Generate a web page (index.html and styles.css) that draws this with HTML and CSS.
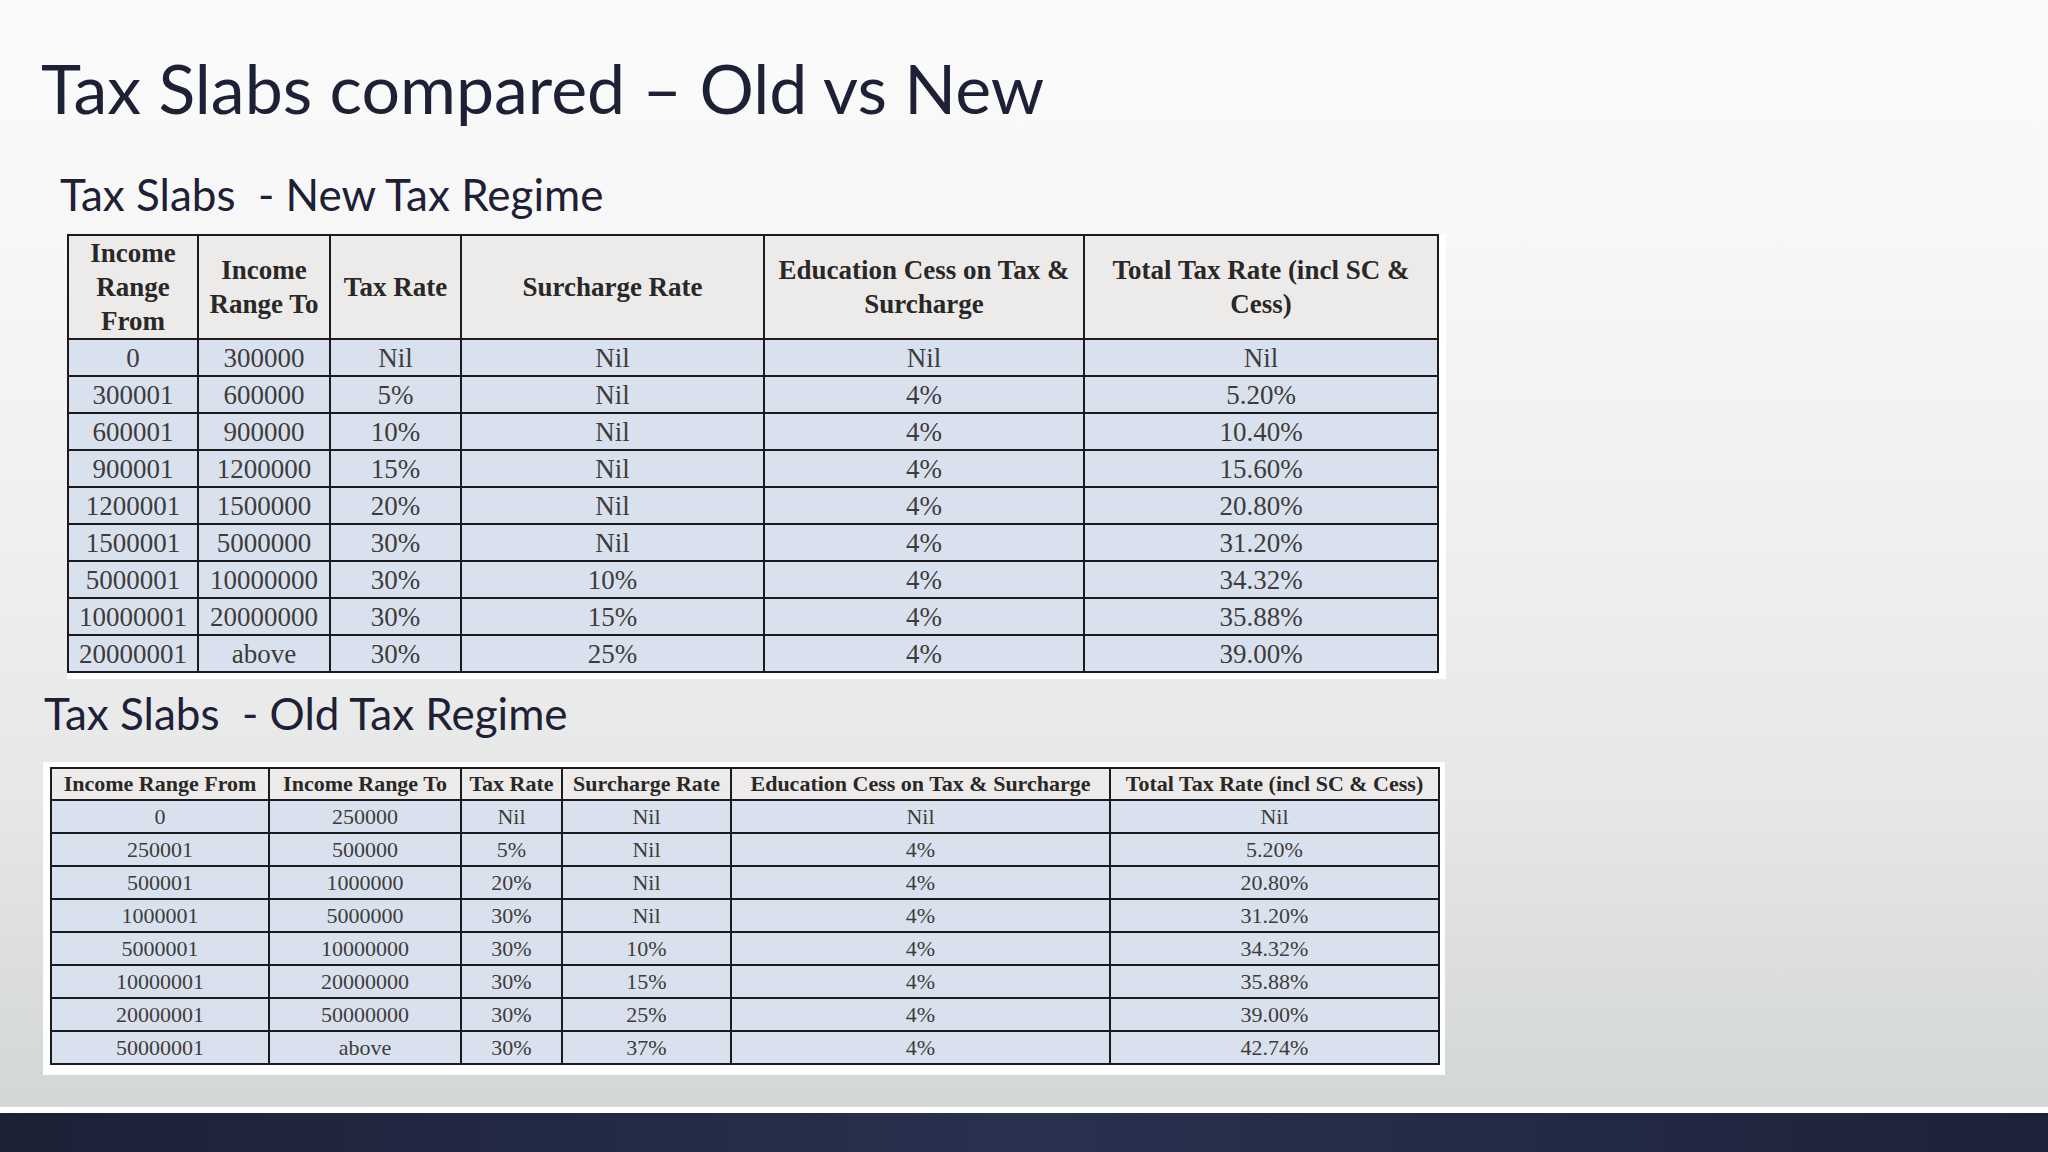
FILE: index.html
```html
<!DOCTYPE html>
<html lang="en">
<head>
<meta charset="utf-8">
<title>Tax Slabs compared – Old vs New</title>
<link rel="stylesheet" href="styles.css">
</head>
<body>
<div class="slide">
  <main class="content">
    <h1 class="title">Tax Slabs compared – Old vs New</h1>

    <h2 class="sub sub-new">Tax Slabs&nbsp; - New Tax Regime</h2>
    <div class="sheet sheet-new">
      <table class="slab slab-new">
        <colgroup>
          <col class="n1"><col class="n2"><col class="n3"><col class="n4"><col class="n5"><col class="n6">
        </colgroup>
        <thead>
          <tr>
            <th>Income Range From</th>
            <th>Income Range To</th>
            <th>Tax Rate</th>
            <th>Surcharge Rate</th>
            <th>Education Cess on Tax &amp; Surcharge</th>
            <th>Total Tax Rate (incl SC &amp; Cess)</th>
          </tr>
        </thead>
        <tbody>
          <tr><td>0</td><td>300000</td><td>Nil</td><td>Nil</td><td>Nil</td><td>Nil</td></tr>
          <tr><td>300001</td><td>600000</td><td>5%</td><td>Nil</td><td>4%</td><td>5.20%</td></tr>
          <tr><td>600001</td><td>900000</td><td>10%</td><td>Nil</td><td>4%</td><td>10.40%</td></tr>
          <tr><td>900001</td><td>1200000</td><td>15%</td><td>Nil</td><td>4%</td><td>15.60%</td></tr>
          <tr><td>1200001</td><td>1500000</td><td>20%</td><td>Nil</td><td>4%</td><td>20.80%</td></tr>
          <tr><td>1500001</td><td>5000000</td><td>30%</td><td>Nil</td><td>4%</td><td>31.20%</td></tr>
          <tr><td>5000001</td><td>10000000</td><td>30%</td><td>10%</td><td>4%</td><td>34.32%</td></tr>
          <tr><td>10000001</td><td>20000000</td><td>30%</td><td>15%</td><td>4%</td><td>35.88%</td></tr>
          <tr><td>20000001</td><td>above</td><td>30%</td><td>25%</td><td>4%</td><td>39.00%</td></tr>
        </tbody>
      </table>
    </div>

    <h2 class="sub sub-old">Tax Slabs&nbsp; - Old Tax Regime</h2>
    <div class="sheet sheet-old">
      <table class="slab slab-old">
        <colgroup>
          <col class="o1"><col class="o2"><col class="o3"><col class="o4"><col class="o5"><col class="o6">
        </colgroup>
        <thead>
          <tr>
            <th>Income Range From</th>
            <th>Income Range To</th>
            <th>Tax Rate</th>
            <th>Surcharge Rate</th>
            <th>Education Cess on Tax &amp; Surcharge</th>
            <th>Total Tax Rate (incl SC &amp; Cess)</th>
          </tr>
        </thead>
        <tbody>
          <tr><td>0</td><td>250000</td><td>Nil</td><td>Nil</td><td>Nil</td><td>Nil</td></tr>
          <tr><td>250001</td><td>500000</td><td>5%</td><td>Nil</td><td>4%</td><td>5.20%</td></tr>
          <tr><td>500001</td><td>1000000</td><td>20%</td><td>Nil</td><td>4%</td><td>20.80%</td></tr>
          <tr><td>1000001</td><td>5000000</td><td>30%</td><td>Nil</td><td>4%</td><td>31.20%</td></tr>
          <tr><td>5000001</td><td>10000000</td><td>30%</td><td>10%</td><td>4%</td><td>34.32%</td></tr>
          <tr><td>10000001</td><td>20000000</td><td>30%</td><td>15%</td><td>4%</td><td>35.88%</td></tr>
          <tr><td>20000001</td><td>50000000</td><td>30%</td><td>25%</td><td>4%</td><td>39.00%</td></tr>
          <tr><td>50000001</td><td>above</td><td>30%</td><td>37%</td><td>4%</td><td>42.74%</td></tr>
        </tbody>
      </table>
    </div>
  </main>
  <div class="stripe"></div>
  <footer class="band"></footer>
</div>
</body>
</html>
```

FILE: styles.css
```css
html, body {
  margin: 0;
  padding: 0;
}

body {
  width: 2048px;
  height: 1152px;
  overflow: hidden;
  font-family: "Lato", "Open Sans", sans-serif;
}

.slide {
  display: flex;
  flex-direction: column;
  width: 2048px;
  height: 1152px;
}

.content {
  flex: 1;
  display: flex;
  flex-direction: column;
  align-items: flex-start;
  background: linear-gradient(to bottom, #fbfbfb 0%, #f7f7f7 22%, #efefef 50%, #e6e7e7 72%, #d4d7d7 100%);
}

.title {
  margin: 54px 0 0 41px;
  font-family: "Lato", sans-serif;
  font-weight: 400;
  font-size: 68px;
  line-height: 1;
  color: #1e2135;
  letter-spacing: 0;
}

.sub {
  font-family: "Lato", sans-serif;
  font-weight: 400;
  font-size: 44px;
  line-height: 1;
  color: #1e2135;
  letter-spacing: 0;
}

.sub-new {
  margin: 50px 0 0 60px;
}

.sub-old {
  margin: 12px 0 0 44px;
}

.sheet {
  background: #ffffff;
}

.sheet-new {
  margin: 18px 0 0 67px;
  padding: 0 7px 6px 0;
}

.sheet-old {
  margin: 27px 0 0 43px;
  padding: 5px 5px 10px 7px;
}

.slab {
  border-collapse: collapse;
  table-layout: fixed;
  font-family: "Liberation Serif", "Times New Roman", serif;
  text-align: center;
}

.slab th,
.slab td {
  border: 2px solid #1b1b1f;
  padding: 0 3px;
  vertical-align: middle;
}

.slab th {
  background: #ecebea;
  color: #2a2826;
  font-weight: 700;
}

.slab td {
  background: #d9e1ef;
  color: #3e3c3a;
  font-weight: 400;
}

/* New regime table */
.slab-new {
  width: 1370px;
}

.slab-new th {
  font-size: 27px;
  line-height: 34px;
  height: 101px;
}

.slab-new td {
  font-size: 27px;
  line-height: 30px;
  height: 35px;
}

.n1 { width: 130px; }
.n2 { width: 132px; }
.n3 { width: 131px; }
.n4 { width: 303px; }
.n5 { width: 320px; }
.n6 { width: 354px; }

/* Old regime table */
.slab-old {
  width: 1388px;
}

.slab-old th {
  font-size: 22px;
  line-height: 26px;
  height: 30px;
  padding: 0 2px;
}

.slab-old td {
  font-size: 22px;
  line-height: 26px;
  height: 31px;
}

.o1 { width: 218px; }
.o2 { width: 192px; }
.o3 { width: 101px; }
.o4 { width: 169px; }
.o5 { width: 379px; }
.o6 { width: 329px; }

.stripe {
  height: 7px;
  background: #ffffff;
  border-top: 1px solid #dcdede;
  box-sizing: border-box;
}

.band {
  height: 39px;
  background: linear-gradient(to right, #1d2136 0%, #232a45 30%, #28314e 50%, #232a45 75%, #1e2238 100%);
}
```
